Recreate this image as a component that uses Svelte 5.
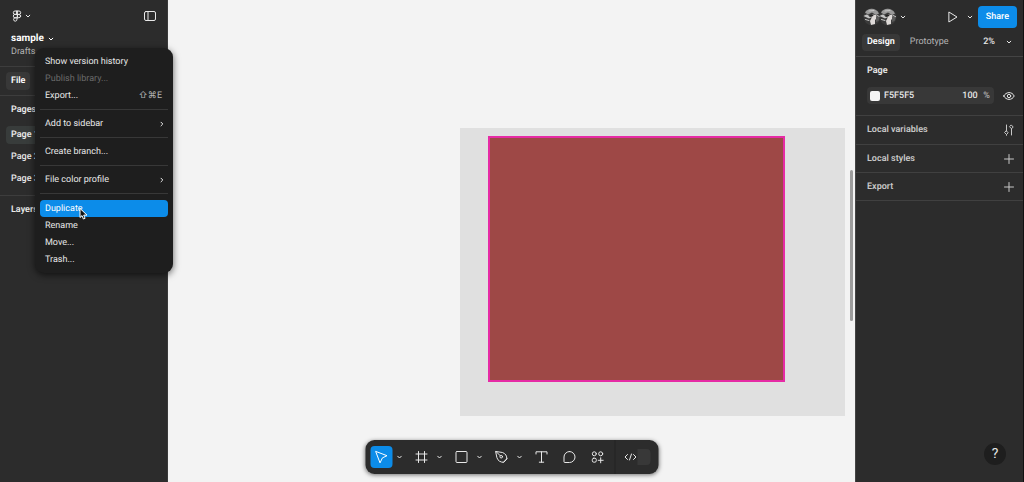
<script lang="ts">
  const pages = ['Page 1', 'Page 2', 'Page 3'];
  const groups = [
    [
      { label: 'Show version history' },
      { label: 'Publish library...', disabled: true },
      { label: 'Export...', keys: '⇧⌘E' }
    ],
    [{ label: 'Add to sidebar', sub: true }],
    [{ label: 'Create branch...' }],
    [{ label: 'File color profile', sub: true }],
    [{ label: 'Duplicate', active: true }, { label: 'Rename' }, { label: 'Move...' }, { label: 'Trash...' }]
  ];
  let fill = $state('F5F5F5');
  let opacity = $state('100');
</script>

{#snippet chevron()}
  <svg class="chev" viewBox="0 0 6 6" width="6" height="6"><path d="M1.2 2.2L3 4l1.8-1.8" /></svg>
{/snippet}

{#snippet plus()}
  <svg viewBox="0 0 12 12" width="12" height="12"><path d="M6 1.5v9M1.5 6h9" /></svg>
{/snippet}

{#snippet avatar()}
  <svg class="avatar" viewBox="0 0 18 18" width="18" height="18">
    <circle cx="9" cy="9" r="8.5" fill="#3a3a3a" stroke="none" />
    <path d="M2 4.5C5-.5 13-.5 16 5.5L13 7 9 4.5 5 6.5z" fill="#9a9a9a" stroke="none" />
    <path d="M.5 8l3-1.5 4 1L9 9 6 10.5z" fill="#c4c4c4" stroke="none" />
    <path d="M9 6.5l4 .5 1 3-2 2v4l-4 1-1-4 1.5-3z" fill="#dedad8" stroke="none" />
    <path d="M5 7.500l5-1 .5 1.500L7 9z" fill="#222" stroke="none" />
    <path d="M13 8.500l4 .5-1.500 4-2.500 1z" fill="#5a5a5a" stroke="none" />
    <path d="M2.500 11.500l3.500 1M14 7.500l2.500 1M6 3l5-.5" stroke="#c8c8c8" />
  </svg>
{/snippet}

<div class="app">
  <aside class="left">
    <div class="top">
      <button class="logo" aria-label="Main menu">
        <svg viewBox="0 0 10 12" width="10" height="12">
          <path d="M5 1H3a1.700 1.700 0 0 0 0 3.400h2zM5 1h2a1.700 1.700 0 0 1 0 3.400H5zM5 4.400H3a1.700 1.700 0 0 0 0 3.400h2zM5 7.800H3a1.700 1.700 0 1 0 2 1.700z" />
          <circle cx="6.900" cy="6.100" r="1.700" />
        </svg>
        {@render chevron()}
      </button>
      <button aria-label="Toggle sidebar">
        <svg viewBox="0 0 12 10" width="12" height="10"><rect x=".5" y=".5" width="11" height="9" rx="1.500" /><path d="M4 .5v9" /></svg>
      </button>
    </div>
    <button class="filename">sample {@render chevron()}</button>
    <div class="drafts">Drafts</div>
    <div class="tabs"><button class="tab on">File</button></div>
    <section class="pages">
      <h2>Pages</h2>
      {#each pages as page, i}
        <button class="page" class:on={i === 0}>{page}</button>
      {/each}
    </section>
    <section class="layers"><h2>Layers</h2></section>
  </aside>

  <main class="canvas">
    <div class="frame"><div class="shape"></div></div>
    <div class="scroll"></div>
    <nav class="toolbar" aria-label="Tools">
      <button class="tool on" aria-label="Move">
        <svg viewBox="0 0 14 14" width="14" height="14"><path d="M1.500 1.500l11 4.200-4.600 2.200-2.200 4.600z" /></svg>
      </button>
      <button class="more" aria-label="Move tools">{@render chevron()}</button>
      <button class="tool" aria-label="Frame">
        <svg viewBox="0 0 14 14" width="14" height="14"><path d="M4 1.500v11M10 1.500v11M1.500 4h11M1.500 10h11" /></svg>
      </button>
      <button class="more" aria-label="Frame tools">{@render chevron()}</button>
      <button class="tool" aria-label="Rectangle">
        <svg viewBox="0 0 14 14" width="14" height="14"><rect x="1.500" y="1.500" width="11" height="11" rx="1" /></svg>
      </button>
      <button class="more" aria-label="Shape tools">{@render chevron()}</button>
      <button class="tool" aria-label="Pen">
        <svg viewBox="0 0 14 14" width="14" height="14"><path d="M1.500 1.500l6.500 1c3 1 4.500 3.500 4.300 6.500L9.300 12.300C6 12.300 3.500 11 2.500 8zM1.500 1.500l4.200 4.200M8.800 12.300l3.700-3.700" /><circle cx="6.700" cy="6.700" r="1.300" /></svg>
      </button>
      <button class="more" aria-label="Pen tools">{@render chevron()}</button>
      <button class="tool" aria-label="Text">
        <svg viewBox="0 0 14 14" width="14" height="14"><path d="M1.500 4V1.800h11V4M7 1.800v10.400M4.800 12.200h4.400" /></svg>
      </button>
      <button class="tool" aria-label="Comment">
        <svg viewBox="0 0 14 14" width="14" height="14"><path d="M7 1.500a5.500 5.500 0 1 1 0 11H2.300a.8.8 0 0 1-.8-.8V7A5.500 5.500 0 0 1 7 1.500z" /></svg>
      </button>
      <button class="tool" aria-label="Actions">
        <svg viewBox="0 0 14 14" width="14" height="14"><circle cx="3.800" cy="3.800" r="2" /><circle cx="10.200" cy="3.800" r="2" /><rect x="1.800" y="8.200" width="4" height="4" rx="1.500" /><path d="M10.200 7.800v5M7.700 10.300h5" /></svg>
      </button>
      <button class="dev" role="switch" aria-checked="false" aria-label="Dev Mode">
        <svg viewBox="0 0 14 14" width="14" height="14"><path d="M4 4.500L1.500 7 4 9.500M10 4.500L12.500 7 10 9.500M8 4l-2 6" /></svg>
      </button>
    </nav>
  </main>

  <aside class="right">
    <div class="share-row">
      <button class="people" aria-label="Collaborators">{@render avatar()}{@render avatar()}{@render chevron()}</button>
      <button class="play" aria-label="Present">
        <svg viewBox="0 0 10 12" width="10" height="12"><path d="M1.200 1.200L9 6l-7.800 4.800z" /></svg>
        {@render chevron()}
      </button>
      <button class="share">Share</button>
    </div>
    <div class="modes">
      <button class="mode on">Design</button>
      <button class="mode">Prototype</button>
      <button class="zoom">2% {@render chevron()}</button>
    </div>
    <section class="page-props">
      <h2>Page</h2>
      <div class="color-row">
        <div class="color">
          <span class="swatch"></span>
          <input class="hex" aria-label="Page color" bind:value={fill} />
          <input class="pct" aria-label="Opacity" bind:value={opacity} />
          <span class="unit">%</span>
        </div>
        <button aria-label="Toggle visibility">
          <svg viewBox="0 0 12 10" width="12" height="10"><path d="M.8 5C3 .4 9 .4 11.200 5 9 9.600 3 9.600.8 5z" /><circle cx="6" cy="5" r="1.700" /></svg>
        </button>
      </div>
    </section>
    <section class="prop">
      <h2>Local variables</h2>
      <button aria-label="Open variables">
        <svg viewBox="0 0 12 12" width="12" height="12"><path d="M3.500 1v6M3.500 10.500v.8M8.500 4.800V11M3.500 7l1.700 1.800-1.700 1.700-1.700-1.700zM8.500 1.200L10.200 3 8.500 4.800 6.800 3z" /></svg>
      </button>
    </section>
    <section class="prop"><h2>Local styles</h2><button aria-label="Add style">{@render plus()}</button></section>
    <section class="prop"><h2>Export</h2><button aria-label="Add export">{@render plus()}</button></section>
    <button class="help" aria-label="Help">?</button>
  </aside>

  <div class="menu" role="menu">
    {#each groups as group}
      <div class="group">
        {#each group as item}
          <button class="item" class:active={item.active} role="menuitem" disabled={item.disabled}>
            <span>{item.label}</span>
            {#if item.keys}<kbd>{item.keys}</kbd>{/if}
            {#if item.sub}<svg class="sub" viewBox="0 0 6 6" width="6" height="6"><path d="M2 1.200L3.800 3 2 4.800" /></svg>{/if}
            {#if item.active}
              <svg class="cursor" viewBox="0 0 9 12" width="9" height="12"><path d="M1 .8v8.700l2-1.900 1.400 3.400 1.700-.7-1.400-3.200h2.900z" /></svg>
            {/if}
          </button>
        {/each}
      </div>
    {/each}
  </div>
</div>

<style>
  :global(body) { margin: 0; }
  * { box-sizing: border-box; }
  .app {
    position: relative;
    display: flex;
    min-height: 100vh;
    font: 9px/12px Roboto, Inter, sans-serif;
    text-rendering: geometricPrecision;
    color: #e8e8e8;
    background: #f3f3f3;
  }
  button, input { font: inherit; text-rendering: inherit; color: inherit; border: 0; padding: 0; margin: 0; background: none; }
  button { display: flex; align-items: center; white-space: nowrap; }
  h2 { margin: 0; font-size: 9px; line-height: 12px; font-weight: 600; }
  svg { flex: none; display: block; fill: none; stroke: currentColor; stroke-width: 1; stroke-linejoin: round; stroke-linecap: round; }

  .left { flex: none; width: 168px; background: #2c2c2c; border-right: 1px solid #3a3a3a; }
  .top { display: flex; justify-content: space-between; padding: 10px 11px 0 12px; height: 32px; align-items: flex-start; }
  .top button { height: 12px; }
  .logo { gap: 3px; }
  .filename { gap: 4px; padding-left: 11px; font-size: 10px; line-height: 14px; font-weight: 700; color: #fff; }
  .drafts { padding: 0 11px; color: #b4b4b4; }
  .tabs { margin-top: 8px; padding: 5px 6px; border: solid #3d3d3d; border-width: 1px 0; }
  .tab { height: 18px; padding: 0 5px; border-radius: 4px; font-weight: 600; }
  .tab.on { background: #383838; color: #fff; }
  .pages { padding: 8px 6px 3px; border-bottom: 1px solid #3d3d3d; }
  .pages h2 { padding: 0 5px; margin-bottom: 10px; }
  .page { width: 100%; height: 18px; padding: 0 5px; margin-bottom: 4px; border-radius: 4px; font-weight: 500; }
  .page.on { background: #383c3b; font-weight: 600; }
  .layers { padding: 8px 11px; }

  .canvas { position: relative; flex: 1; min-width: 0; overflow: hidden; }
  .frame { position: absolute; left: 292px; top: 128px; width: 385px; height: 288px; background: #e0e0e0; }
  .shape { width: 297px; height: 246px; margin: 8px 0 0 28px; background: #9e4846; border: 2px solid #e62ba5; }
  .scroll { position: absolute; right: 2px; top: 170px; width: 3px; height: 151px; border-radius: 2px; background: #9c9c9c; }
  .toolbar {
    position: absolute; left: 50%; bottom: 8px; transform: translateX(-50%);
    display: flex; align-items: center; padding: 5px; height: 34px;
    border-radius: 9px; background: #2c2c2c; box-shadow: 0 1px 4px #0008;
  }
  .tool { width: 22px; height: 22px; margin: 0 3px; justify-content: center; border-radius: 4px; }
  .tool.on { background: #0c8ce9; color: #fff; margin-left: 0; }
  .more { width: 12px; height: 22px; margin-left: -2px; justify-content: center; }
  .more + .tool { margin-left: 5px; }
  .dev { align-self: stretch; margin: -5px 0 -5px 3px; padding: 0 3px 0 8px; border-left: 1px solid #222; }
  .dev::after { content: ""; width: 13px; height: 16px; border-radius: 0 4px 4px 0; background: #383838; }

  .right { position: relative; flex: none; width: 169px; background: #2c2c2c; border-left: 1px solid #444; border-right: 1px solid #111; }
  .share-row { display: flex; align-items: center; padding: 5px 6px 5px 7px; height: 33px; }
  .people .avatar + .avatar { margin-left: -2px; }
  .people .chev { margin-left: 3px; }
  .play { gap: 9px; margin-left: auto; }
  .share { height: 22px; margin-left: 5px; padding: 0 8px; border-radius: 4px; background: #0c8ce9; color: #fff; font-weight: 500; }
  .modes { display: flex; align-items: center; height: 24px; padding: 1px 11px 6px 6px; border-bottom: 1px solid #444; }
  .mode { height: 17px; padding: 0 5px; border-radius: 4px; color: #b4b4b4; }
  .mode.on { background: #383838; color: #fff; font-weight: 600; }
  .mode + .mode { margin-left: 5px; }
  .zoom { margin-left: auto; gap: 11px; font-weight: 500; }
  .page-props { padding: 8px 8px 11px 11px; }
  .color-row { display: flex; align-items: center; gap: 9px; margin-top: 10px; }
  .color { display: flex; align-items: center; flex: 1; min-width: 0; height: 17px; padding: 0 4px 0 3px; border-radius: 4px; background: #383838; font-weight: 500; }
  .swatch { flex: none; width: 10px; height: 10px; border-radius: 2px; background: #f5f5f5; }
  .hex { flex: 1; min-width: 0; margin-left: 4px; }
  .pct { width: 21px; }
  .unit { color: #b4b4b4; }
  .prop { display: flex; align-items: center; justify-content: space-between; padding: 8px 8px 8px 11px; border-top: 1px solid #404040; color: #c8c8c8; }
  .prop + .prop { padding-bottom: 7px; }
  .prop:nth-last-child(2) { border-bottom: 1px solid #404040; }
  .help { position: absolute; right: 17px; bottom: 17px; width: 22px; height: 22px; justify-content: center; border-radius: 50%; background: #1e1e1e; font-size: 14px; }

  .menu { position: absolute; left: 35px; top: 48px; width: 138px; padding: 5px; border-radius: 9px; background: #1e1e1e; box-shadow: 0 2px 7px #0009; }
  .group + .group { margin-top: 5px; padding-top: 5px; border-top: 1px solid #383838; }
  .group:last-child { padding-top: 6px; }
  .item { position: relative; width: 100%; height: 17px; padding: 0 3px 0 5px; justify-content: space-between; border-radius: 4px; }
  .item:disabled { color: #6a6a6a; }
  .item.active { background: #0c8ce9; color: #fff; }
  kbd { font: inherit; color: #b4b4b4; padding-right: 3px; }
  .cursor { position: absolute; left: 39px; top: 8px; }
  .cursor path { fill: #111; stroke: #fff; stroke-width: 1; }
</style>
